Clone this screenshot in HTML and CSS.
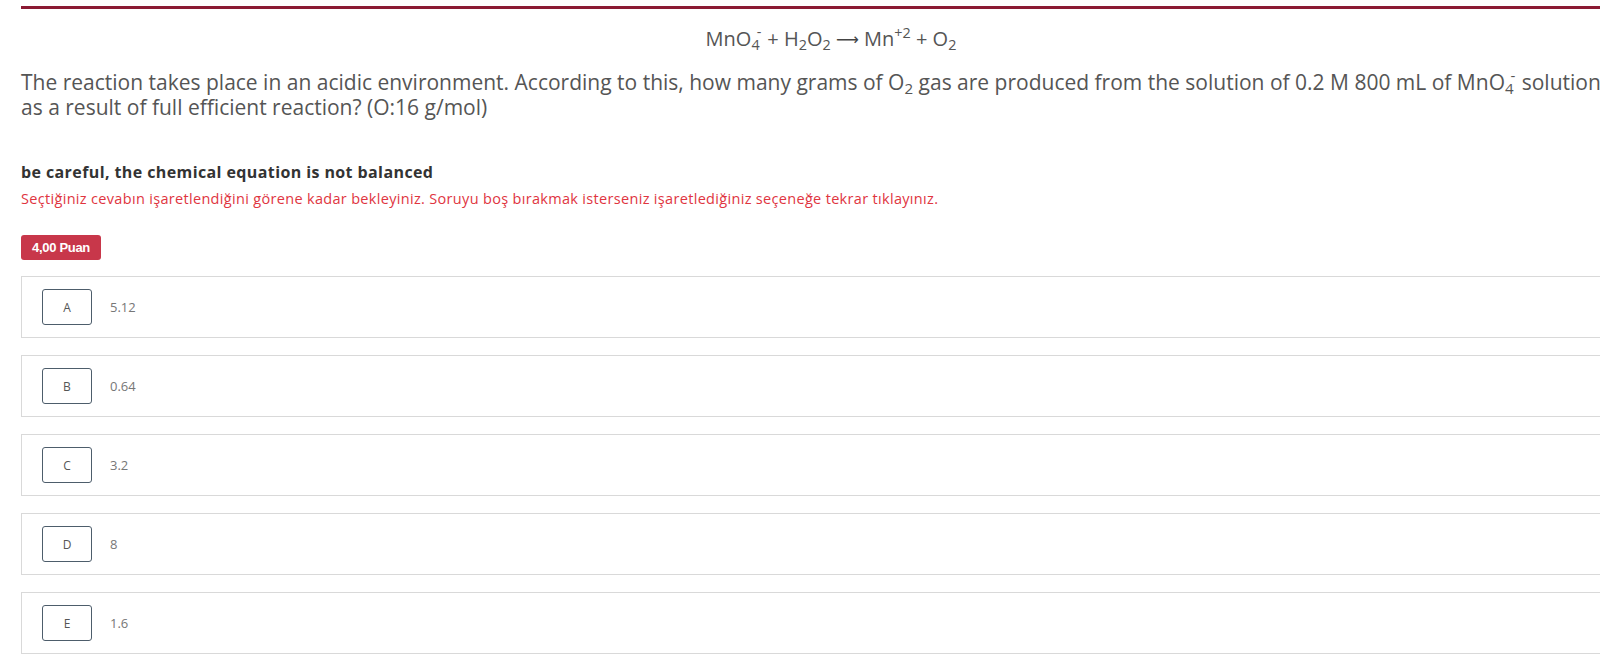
FILE: index.html
```html
<!DOCTYPE html>
<html>
<head>
<meta charset="utf-8">
<link rel="stylesheet" href="styles.css">
</head>
<body>
<div class="page">
  <div class="rule"></div>
  <div class="equation">MnO<sub>4</sub><sup class="neg">-</sup> + H<sub>2</sub>O<sub>2</sub> <span class="arrow">&#10230;</span> Mn<sup>+2</sup> + O<sub>2</sub></div>
  <p class="question">The reaction takes place in an acidic environment. According to this, how many grams of O<sub>2</sub> gas are produced from the solution of 0.2 M 800 mL of MnO<sub>4</sub><sup class="neg">-</sup> solution<br>as a result of full efficient reaction? (O:16 g/mol)</p>
  <p class="note">be careful, the chemical equation is not balanced</p>
  <p class="warn">Seçtiğiniz cevabın işaretlendiğini görene kadar bekleyiniz. Soruyu boş bırakmak isterseniz işaretlediğiniz seçeneğe tekrar tıklayınız.</p>
  <div class="badge">4,00 Puan</div>
  <div class="options">
    <div class="option"><span class="letter">A</span><span class="value">5.12</span></div>
    <div class="option"><span class="letter">B</span><span class="value">0.64</span></div>
    <div class="option"><span class="letter">C</span><span class="value">3.2</span></div>
    <div class="option"><span class="letter">D</span><span class="value">8</span></div>
    <div class="option"><span class="letter">E</span><span class="value">1.6</span></div>
  </div>
</div>
</body>
</html>
```
FILE: styles.css
```css
html, body {
  margin: 0;
  padding: 0;
  background: #fff;
  overflow: hidden;
}
.page {
  width: 1620px;
  padding: 6px 0 0 21px;
  font-family: "Open Sans", "Liberation Sans", sans-serif;
  color: #555;
}
.rule {
  height: 3px;
  background: #8b1a33;
}
.equation {
  text-align: center;
  font-size: 20px;
  line-height: 26px;
  margin-top: 17px;
  color: #555;
}
sub, sup {
  font-size: 72%;
  line-height: 0;
}
sub { vertical-align: -0.28em; }
sup { vertical-align: 0.55em; }
sup.neg {
  margin-left: -0.2em;
  margin-right: 0.05em;
  vertical-align: 0.62em;
}
.arrow {
  font-family: "DejaVu Sans", sans-serif;
  font-size: 16px;
  color: #444;
  vertical-align: 0.05em;
}
.question {
  margin: 17px 0 0;
  font-size: 21px;
  line-height: 25px;
  color: #555;
}
.note {
  margin: 42px 0 0;
  font-family: "Open Sans", sans-serif;
  font-weight: 700;
  font-size: 16px;
  line-height: 20px;
  letter-spacing: 0.4px;
  color: #333;
}
.warn {
  margin: 8px 0 0;
  font-family: "Open Sans", sans-serif;
  font-size: 14.5px;
  line-height: 18px;
  letter-spacing: 0.32px;
  color: #e0353f;
}
.badge {
  width: max-content;
  margin-top: 27px;
  height: 25px;
  line-height: 25px;
  padding: 0 11px;
  border-radius: 3px;
  background: #c8374a;
  color: #fff;
  font-family: "Liberation Sans", Arial, sans-serif;
  font-weight: 700;
  font-size: 13px;
  letter-spacing: -0.3px;
}
.options {
  margin-top: 16px;
  display: flex;
  flex-direction: column;
  gap: 17px;
}
.option {
  height: 60px;
  border: 1px solid #d9d9d9;
  display: flex;
  align-items: center;
  padding-left: 20px;
}
.letter {
  width: 48px;
  height: 34px;
  border: 1px solid #4d5d6b;
  border-radius: 3px;
  display: flex;
  align-items: center;
  justify-content: center;
  font-size: 12px;
  color: #555;
}
.value {
  margin-left: 18px;
  font-size: 13px;
  color: #777;
}
```
